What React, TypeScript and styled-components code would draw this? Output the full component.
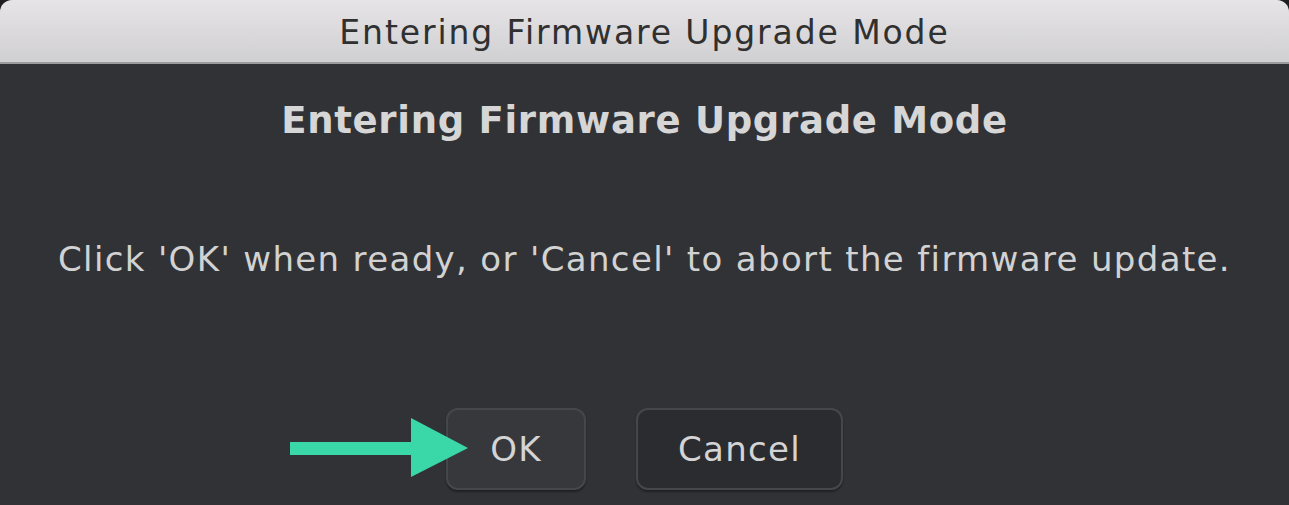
import styled, { createGlobalStyle } from 'styled-components';

const GlobalStyle = createGlobalStyle`
	html, body {
		margin: 0;
		padding: 0;
		background: #1e1e20;
	}
	#root {
		height: 505px;
	}
`;

const Window = styled.div`
	width: 1289px;
	height: 505px;
	display: flex;
	flex-direction: column;
	background-color: #313236;
	border-radius: 12px 12px 0 0;
	overflow: hidden;
	font-family: 'DejaVu Sans', Verdana, sans-serif;
`;

const TitleBar = styled.div`
	height: 64px;
	box-sizing: border-box;
	padding-top: 3px;
	flex-shrink: 0;
	display: flex;
	align-items: center;
	justify-content: center;
	background: linear-gradient(#e6e4e6, #d0cfd1);
	border-bottom: 2px solid #9b9a9c;
	color: #303030;
	font-size: 33px;
	letter-spacing: 1.9px;
`;

const Content = styled.div`
	flex-grow: 1;
	display: flex;
	flex-direction: column;
	align-items: center;
`;

const Heading = styled.h3`
	margin: 35px 0 0;
	font-size: 37px;
	line-height: 44px;
	font-weight: bold;
	letter-spacing: 0.7px;
	color: #d6d6d6;
`;

const Message = styled.p`
	margin: 96px 0 0;
	font-size: 34px;
	line-height: 40px;
	letter-spacing: 1.35px;
	color: #d2d2d2;
`;

const ButtonRow = styled.div`
	margin-top: 129px;
	display: flex;
	align-items: center;
	gap: 50px;
	position: relative;
`;

const DialogButton = styled.button<{ $primary?: boolean }>`
	box-sizing: border-box;
	height: 82px;
	width: ${(p) => (p.$primary ? '140px' : '207px')};
	border-radius: 12px;
	border: 2px solid #46474b;
	background-color: ${(p) => (p.$primary ? '#37383c' : '#2b2c30')};
	box-shadow: 0 2px 2px rgba(0, 0, 0, 0.35);
	color: #d4d4d4;
	font-family: inherit;
	font-size: 34px;
	letter-spacing: 1.3px;
	padding: 0;
`;

const Arrow = styled.svg`
	position: absolute;
	left: -156px;
	top: 10px;
`;

const App = () => {
	return (
		<>
			<GlobalStyle />
			<Window>
				<TitleBar>Entering Firmware Upgrade Mode</TitleBar>
				<Content>
					<Heading>Entering Firmware Upgrade Mode</Heading>
					<Message>Click 'OK' when ready, or 'Cancel' to abort the firmware update.</Message>
					<ButtonRow>
						<Arrow width="180" height="60" viewBox="0 0 180 60">
							<rect x="0" y="24" width="124" height="13" fill="#3ad8a8" />
							<polygon points="121,0 178,30 121,59" fill="#3ad8a8" />
						</Arrow>
						<DialogButton $primary>OK</DialogButton>
						<DialogButton>Cancel</DialogButton>
					</ButtonRow>
				</Content>
			</Window>
		</>
	);
};

export default App;
